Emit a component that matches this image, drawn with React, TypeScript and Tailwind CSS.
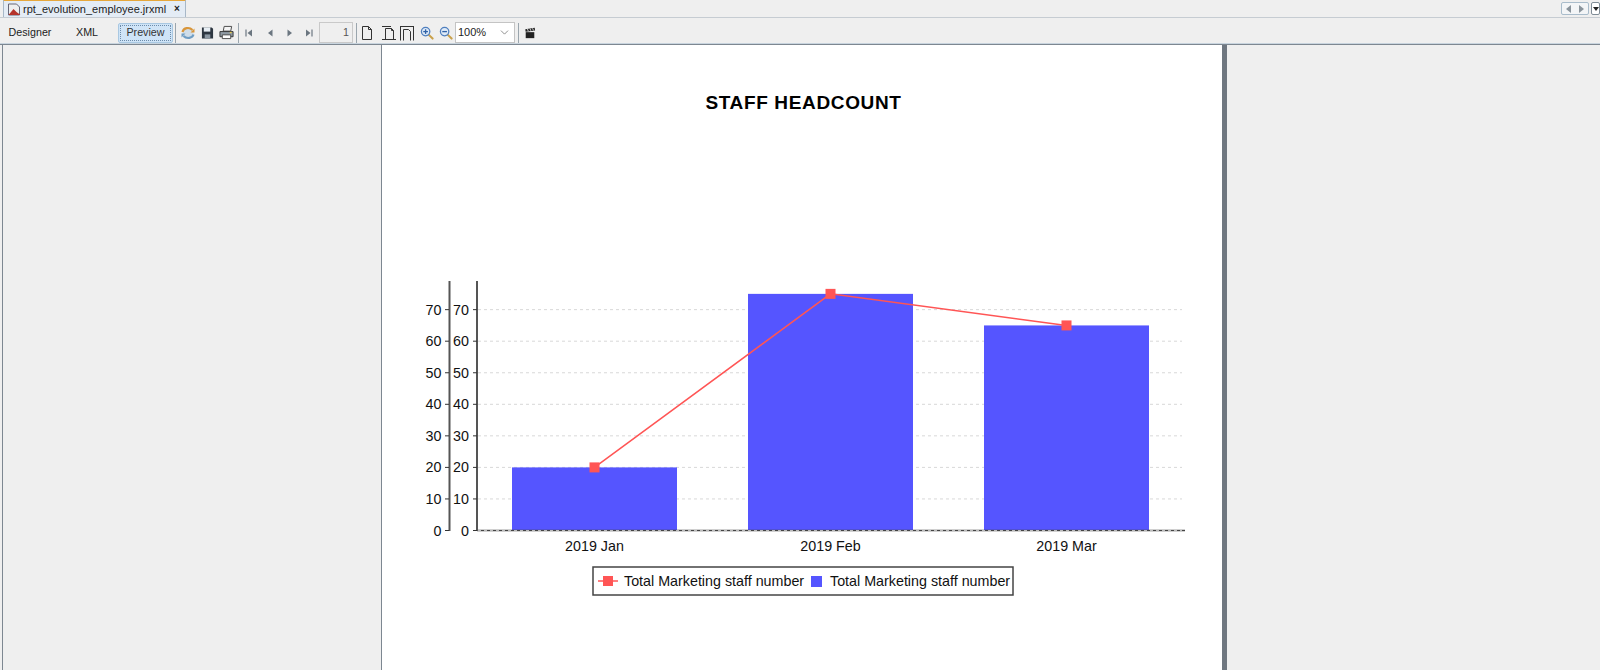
import { ChevronDown } from "lucide-react"

const ticks = [0, 10, 20, 30, 40, 50, 60, 70]
const yOf = (v: number) => 530.5 - v * 3.155
const bars = [
  { label: "2019 Jan", value: 20, x: 512 },
  { label: "2019 Feb", value: 75, x: 748 },
  { label: "2019 Mar", value: 65, x: 984 },
]

const Sep = () => <div className="w-px h-[20px] bg-[#9aa5ad] mx-[3px]" />

const FirstIcon = ({ flip }: { flip?: boolean }) => (
  <svg width="10" height="10" viewBox="0 0 10 10" className={flip ? "-scale-x-100" : ""}>
    <path d="M2 1.5v7" stroke="#6b7680" strokeWidth="1.2" />
    <path d="M8 1.5v7L3.5 5z" fill="#6b7680" />
  </svg>
)

const StepIcon = ({ flip }: { flip?: boolean }) => (
  <svg width="10" height="10" viewBox="0 0 10 10" className={flip ? "-scale-x-100" : ""}>
    <path d="M7.5 1.5v7L3 5z" fill="#6b7680" />
  </svg>
)

const PageIcon = () => (
  <svg width="14" height="16" viewBox="0 0 14 16" fill="none" stroke="#333">
    <path d="M2.5 1.5h6l3 3v10h-9z" />
    <path d="M8.5 1.5v3h3" />
  </svg>
)

const FitWidthIcon = () => (
  <svg width="16" height="16" viewBox="0 0 16 16" fill="none" stroke="#333">
    <path d="M1 1.5h9M1 14.5h14" />
    <path d="M4.5 14.5v-11h6l2 2v9" />
    <path d="M10.5 3.5v2h2" />
  </svg>
)

const FitPageIcon = () => (
  <svg width="16" height="16" viewBox="0 0 16 16" fill="none" stroke="#333">
    <path d="M1 1.5h14M1.5 1.5v14M14.5 1.5v14" />
    <path d="M4.5 15.5v-11h5l2 2v9" />
  </svg>
)

const ZoomIcon = ({ plus }: { plus?: boolean }) => (
  <svg width="14" height="14" viewBox="0 0 15 15">
    <path d="M9.5 9.5l4 4" stroke="#c9a04a" strokeWidth="2.2" strokeLinecap="round" />
    <circle cx="6" cy="6" r="4.5" fill="#dfeaf7" stroke="#4f7fbe" strokeWidth="1.4" />
    <path d="M3.5 6h5" stroke="#2f62a8" strokeWidth="1.4" />
    {plus && <path d="M6 3.5v5" stroke="#2f62a8" strokeWidth="1.4" />}
  </svg>
)

const Toolbar = () => (
  <div className="h-[25px] flex items-center pt-[4px] pl-[3px] text-[10.7px] text-[#222] bg-[#efefef]">
    <div className="w-[54px] text-center">Designer</div>
    <div className="w-[60px] text-center">XML</div>
    <div className="w-[55px] h-[20px] ml-[1px] flex items-center justify-center rounded-[2px] border border-[#a9c8e2] bg-[#cfe4f7] text-[#333] outline-1 outline-dotted -outline-offset-3 outline-[#6d8cab]">
      Preview
    </div>
    <div className="-ml-[1px]"><Sep /></div>
    <div className="flex items-center gap-[5px] ml-[1px]">
      <svg width="16" height="16" viewBox="0 0 16 16" fill="none">
        <circle cx="8" cy="8" r="5.5" fill="#cfdde9" />
        <path d="M2.5 7C3.5 3 9 1.5 12.5 5" stroke="#d9963a" strokeWidth="2.2" />
        <path d="M14.5 3.5v4h-4z" fill="#d9963a" />
        <path d="M13.5 9.5C12.5 13 7 14.5 3.5 11" stroke="#6f9dc4" strokeWidth="2.2" />
        <path d="M1.5 12.5v-4h4z" fill="#6f9dc4" />
      </svg>
      <svg width="13" height="14" viewBox="0 0 14 14">
        <path d="M1 1h10.5L13 2.5V13H1z" fill="#2d3640" />
        <path d="M3 1h7v4.5H3z" fill="#e6edf3" />
        <path d="M4 8.5h6V13H4z" fill="#8c98a3" />
      </svg>
      <svg width="15" height="15" viewBox="0 0 16 15">
        <path d="M5.5 1h8l-1 5h-8z" fill="#f4f4f4" stroke="#444" />
        <path d="M1 6.5h14v5.5H1z" fill="#8f9aa3" stroke="#333" />
        <path d="M3.5 10h9v4h-9z" fill="#fff" stroke="#444" />
        <path d="M11.5 7.5h2" stroke="#e5c84a" strokeWidth="1.4" />
      </svg>
    </div>
    <div className="ml-[1px]"><Sep /></div>
    <div className="flex items-center ml-[2px]">
      <FirstIcon />
      <div className="ml-[11px]"><StepIcon /></div>
      <div className="ml-[10px]"><StepIcon flip /></div>
      <div className="ml-[9px]"><FirstIcon flip /></div>
    </div>
    <div className="w-[34px] h-[21px] ml-[5px] pr-[3px] flex items-center justify-end border border-[#c9c9c9] bg-[#efefef] text-[#555]">1</div>
    <div><Sep /></div>
    <div className="flex items-center">
      <PageIcon />
      <div className="ml-[7px]"><FitWidthIcon /></div>
      <div className="ml-[2px]"><FitPageIcon /></div>
    </div>
    <div className="flex items-center gap-[5px] ml-[5px]">
      <ZoomIcon plus />
      <ZoomIcon />
    </div>
    <div className="w-[60px] h-[21px] ml-[2px] pl-[2px] pr-[3px] flex items-center justify-between border border-[#c4c4c4] bg-white text-[11px] text-[#222]">
      100%
      <ChevronDown size={13} strokeWidth={1.2} className="text-[#555]" />
    </div>
    <div><Sep /></div>
    <svg width="12" height="12" viewBox="0 0 14 14" className="ml-[2px]">
      <path d="M2 6h10v7H2z" fill="#222" />
      <path d="M1.5 2.5l11-1.5.4 3-11 1.5z" fill="#222" />
      <path d="M4 2.3l1 2.5M7 1.9l1 2.5M10 1.5l1 2.5" stroke="#eee" strokeWidth="1" />
    </svg>
  </div>
)

const ReportChart = () => (
  <svg width="841" height="400" viewBox="382 260 841 400" className="absolute left-0 top-[215px]" fontFamily="'Liberation Sans', Arial, sans-serif">
    {ticks.slice(1).map((t) => (
      <line key={t} x1="478" x2="1182" y1={yOf(t)} y2={yOf(t)} stroke="#d8d8d8" strokeWidth="1" strokeDasharray="3 3" />
    ))}
    {bars.map((b) => (
      <rect key={b.label} x={b.x} y={yOf(b.value)} width="165" height={530.5 - yOf(b.value)} fill="#5555ff" />
    ))}
    <line x1="477" x2="1185" y1="530.5" y2="530.5" stroke="#444" strokeWidth="1.4" />
    <line x1="478" x2="1182" y1="530.5" y2="530.5" stroke="#bbb" strokeWidth="1" strokeDasharray="3 3" />
    <line x1="449.5" x2="449.5" y1="281" y2="531" stroke="#555" strokeWidth="2" />
    <line x1="477" x2="477" y1="281" y2="531" stroke="#555" strokeWidth="2" />
    {ticks.map((t) => (
      <g key={t}>
        <line x1="445" x2="449" y1={yOf(t)} y2={yOf(t)} stroke="#333" />
        <line x1="473" x2="477" y1={yOf(t)} y2={yOf(t)} stroke="#333" />
        <text x="441.5" y={yOf(t) + 5} textAnchor="end" fontSize="14.3" fill="#111">{t}</text>
        <text x="469" y={yOf(t) + 5} textAnchor="end" fontSize="14.3" fill="#111">{t}</text>
      </g>
    ))}
    <polyline points={bars.map((b) => `${b.x + 82.5},${yOf(b.value)}`).join(" ")} fill="none" stroke="#ff5555" strokeWidth="1.5" />
    {bars.map((b) => (
      <rect key={b.label} x={b.x + 77.5} y={yOf(b.value) - 5} width="10" height="10" fill="#ff5555" />
    ))}
    {bars.map((b) => (
      <text key={b.label} x={b.x + 82.5} y="551" textAnchor="middle" fontSize="14.3" fill="#111">{b.label}</text>
    ))}
    <rect x="593" y="567" width="420" height="28" fill="#fff" stroke="#444" strokeWidth="1.5" />
    <line x1="598" x2="618" y1="581" y2="581" stroke="#ff5555" strokeWidth="1.5" />
    <rect x="603" y="576" width="10" height="10" fill="#ff5555" />
    <text x="624" y="586" fontSize="14.3" fill="#111">Total Marketing staff number</text>
    <rect x="811" y="576" width="11" height="11" fill="#5555ff" />
    <text x="830" y="586" fontSize="14.3" fill="#111">Total Marketing staff number</text>
  </svg>
)

export default function App() {
  return (
    <div className="w-[1600px] h-[670px] overflow-hidden flex flex-col bg-[#efefef] font-['Liberation_Sans',Arial,sans-serif]">
      <div className="h-[18px] flex items-end justify-between border-b border-[#c6ccd2]">
        <div className="h-[18px] w-[183px] ml-[3px] flex items-center gap-[1px] pl-[3px] border border-b-0 border-[#a8b8c8] border-t-[#e6a73c] border-t-2 bg-[#e4ecf5] text-[11px] text-[#222]">
          <svg width="15" height="13" viewBox="0 0 14 13">
            <path d="M1 12V1h8l3 3v8z" fill="#eee" stroke="#667" />
            <path d="M1 12l5-6 3 3 4 3z" fill="#b5332b" />
          </svg>
          <span>rpt_evolution_employee.jrxml</span>
          <span className="ml-[7px] text-[10px] font-bold leading-none">×</span>
        </div>
        <div className="flex items-center gap-[2px] pb-[2px] pr-0">
          <div className="h-[13px] w-[28px] flex items-center justify-around border border-[#a9bccb] rounded-[2px] bg-[#f3f5f7]">
            <span className="w-0 h-0 border-y-[4px] border-y-transparent border-r-[5px] border-r-[#8a949c]" />
            <span className="w-0 h-0 border-y-[4px] border-y-transparent border-l-[5px] border-l-[#8a949c]" />
          </div>
          <div className="h-[13px] w-[9px] flex items-center justify-center border border-[#7f8c96] rounded-[2px] bg-white">
            <span className="w-0 h-0 border-x-[3px] border-x-transparent border-t-[4px] border-t-[#222]" />
          </div>
        </div>
      </div>
      <Toolbar />
      <div className="h-[1px] bg-[#c8d4de]" />
      <div className="flex-1 flex border-t border-[#7d8791] min-h-0">
        <div className="w-[2px]" />
        <div className="w-[379px] border-l border-[#7d8791]" />
        <div className="relative w-[841px] bg-white border-l border-[#7d8791]">
          <div className="pt-[48px] pl-[3px] text-center text-[19px] font-bold tracking-[0.64px] text-black leading-[20px]">STAFF HEADCOUNT</div>
          <ReportChart />
        </div>
        <div className="w-[5px] bg-[#6f7780]" />
      </div>
    </div>
  )
}
